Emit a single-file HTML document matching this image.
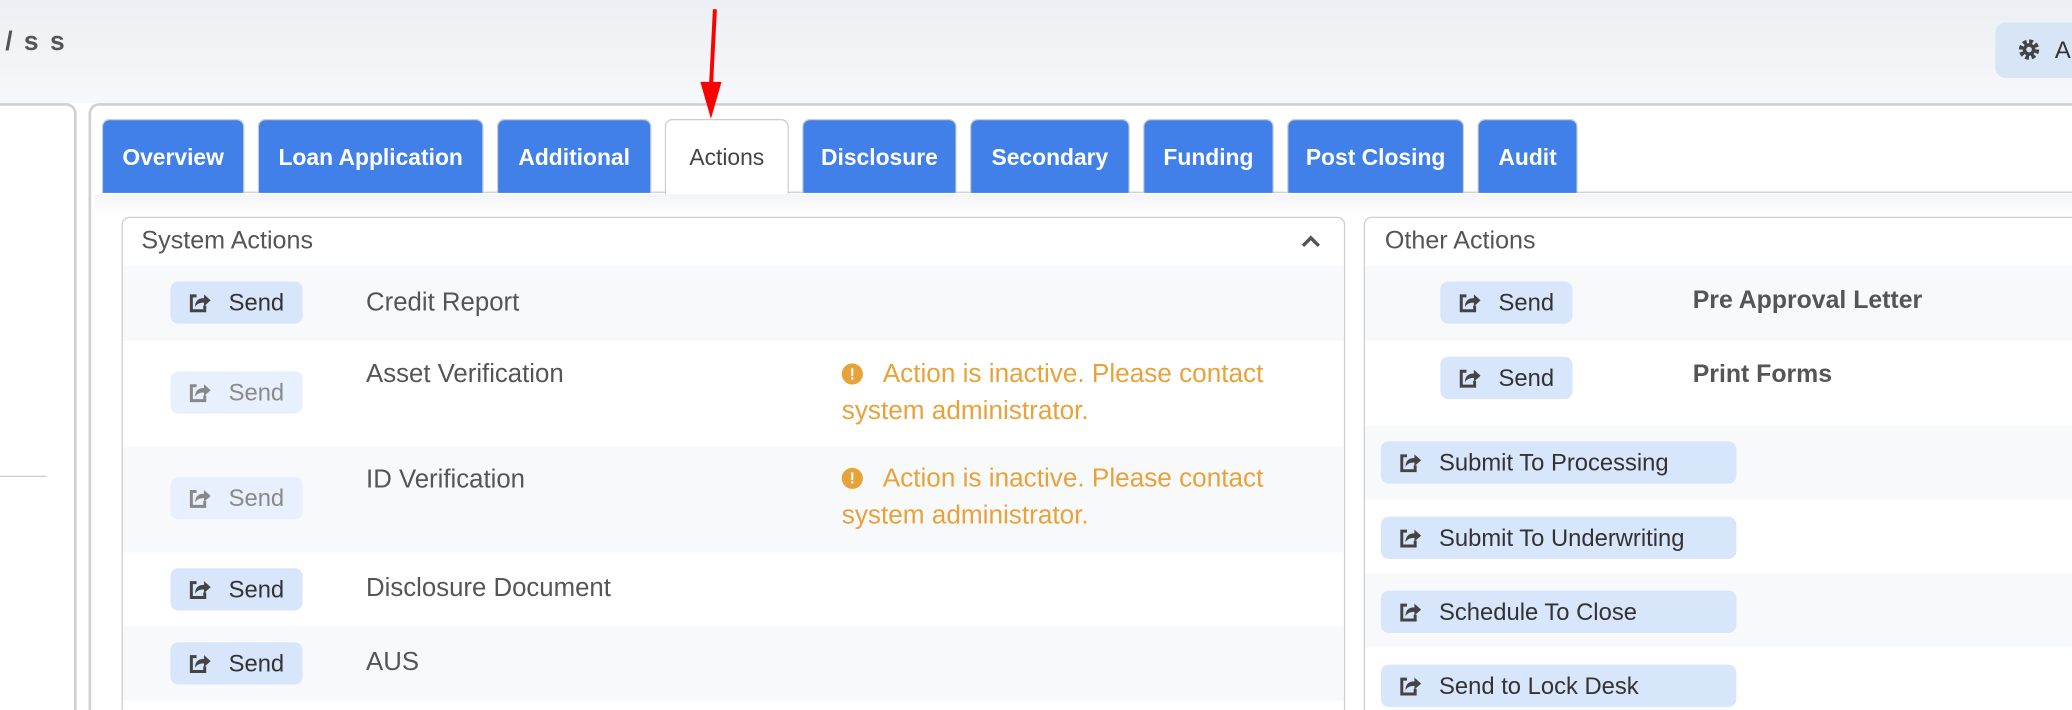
<!DOCTYPE html>
<html><head><meta charset="utf-8"><style>
html,body{margin:0;padding:0;width:2072px;height:710px;overflow:hidden;background:#fff}
#w{position:absolute;left:0;top:0;width:2072px;height:710px;overflow:hidden}
#s{position:absolute;left:0;top:0;width:1568px;height:538px;overflow:hidden;transform:scale(1.32143);transform-origin:0 0;font-family:"Liberation Sans",sans-serif;color:#555}
.a{position:absolute}
.hdr{left:0;top:0;width:1568px;height:78px;background:linear-gradient(#eceff3,#f6f8fb)}
.tab{position:absolute;top:90px;height:56px;background:#4080e8;color:#fff;font-weight:bold;font-size:17.3px;line-height:56px;text-align:center;border-radius:6px 6px 0 0;border:1px solid #c9cdd3;border-bottom:none;box-sizing:border-box;white-space:nowrap}
.tab.on{background:#fff;color:#444;font-weight:normal;height:57px}
.btn{position:absolute;height:32px;background:#d7e6fa;border-radius:6px;font-size:18px;line-height:33px;color:#333;box-sizing:border-box;white-space:nowrap}
.btn svg{position:absolute;left:13px;top:7px}
.btn span{position:absolute;left:44px}
.btn.dis{background:#e7f0fc;color:#8a8a8a}
.lbl{position:absolute;font-size:19.5px;color:#555;white-space:nowrap}
.row{position:absolute;left:0;right:0;background:#f8f9fb}
.warn{position:absolute;left:544px;width:380px;font-size:19.8px;line-height:28px;color:#e8a23a;white-space:nowrap}
.warn i{position:absolute;left:0;top:6px;width:16px;height:16px;border-radius:50%;background:#e8a23a;color:#fff;font-style:normal;font-weight:bold;font-size:12px;line-height:16px;text-align:center}
.warn b{font-weight:normal;padding-left:31px}
</style></head><body><div id="w"><div id="s">
<div class="a hdr"></div>
<div class="a" style="left:4px;top:21px;font-size:20px;font-weight:bold;color:#555;letter-spacing:1.5px">/ s s</div>
<div class="a" style="left:1510px;top:17px;width:80px;height:42px;background:#d7e5f7;border-radius:8px"></div>
<svg class="a" style="left:1527px;top:29px" width="17" height="17" viewBox="0 0 16 16"><circle cx="8" cy="8" r="5.5" fill="none" stroke="#444" stroke-width="3.5" stroke-dasharray="2.6 1.7"/><circle cx="8" cy="8" r="4.5" fill="#444"/><circle cx="8" cy="8" r="2" fill="#d7e5f7"/></svg>
<div class="a" style="left:1555px;top:28px;font-size:18px;color:#333">A</div>
<div class="a" style="left:-10px;top:78px;width:68px;height:520px;background:#fff;border:2px solid #d0d0d0;border-radius:8px;box-sizing:border-box"></div>
<div class="a" style="left:0;top:360px;width:35px;height:1px;background:#ccc"></div>
<div class="a" style="left:67px;top:78px;width:1520px;height:520px;background:#fff;border:2px solid #d0d0d0;border-radius:8px;box-sizing:border-box"></div>
<div class="a" style="left:77px;top:145px;width:1500px;height:1px;background:#cfcfcf"></div>
<div class="tab" style="left:77px;width:108px">Overview</div>
<div class="tab" style="left:195px;width:171px">Loan Application</div>
<div class="tab" style="left:376px;width:117px">Additional</div>
<div class="tab on" style="left:503px;width:94px">Actions</div>
<div class="tab" style="left:607px;width:117px">Disclosure</div>
<div class="tab" style="left:734px;width:121px">Secondary</div>
<div class="tab" style="left:865px;width:99px">Funding</div>
<div class="tab" style="left:974px;width:134px">Post Closing</div>
<div class="tab" style="left:1118px;width:76px">Audit</div>
<div class="a" style="left:72px;top:147px;width:1500px;height:16px;background:linear-gradient(#f3f4f6,#fff)"></div>

<div class="a" style="left:92px;top:164px;width:924px;height:440px;border:1px solid #cfcfcf;border-radius:6px;background:#fff;overflow:hidden">
 <div class="a" style="left:14px;top:7px;font-size:19px;color:#555">System Actions</div>
 <svg class="a" style="left:891px;top:12px" width="16" height="12" viewBox="0 0 16 12"><path d="M2 9L8 3l6 6" fill="none" stroke="#555" stroke-width="2.6"/></svg>
 <div class="row" style="top:36px;height:57px"></div>
 <div class="row" style="top:173px;height:80px"></div>
 <div class="row" style="top:309px;height:56px"></div>
 <div class="btn" style="left:36px;top:48px;width:100px"><svg width="18" height="18" viewBox="0 0 16 16"><path d="M6 3.5H2.5v10h9V10" fill="none" stroke="#444" stroke-width="2"/><path d="M5 11c0-4 2-6 6-6V2.5l4.5 4-4.5 4V8c-3 0-5 1-6 3z" fill="#444"/></svg><span>Send</span></div>
 <div class="lbl" style="left:184px;top:53px">Credit Report</div>
 <div class="btn dis" style="left:36px;top:116px;width:100px"><svg width="18" height="18" viewBox="0 0 16 16"><path d="M6 3.5H2.5v10h9V10" fill="none" stroke="#888" stroke-width="2"/><path d="M5 11c0-4 2-6 6-6V2.5l4.5 4-4.5 4V8c-3 0-5 1-6 3z" fill="#888"/></svg><span>Send</span></div>
 <div class="lbl" style="left:184px;top:107px">Asset Verification</div>
 <div class="warn" style="top:104px"><i>!</i><b>Action is inactive. Please contact</b><br>system administrator.</div>
 <div class="btn dis" style="left:36px;top:196px;width:100px"><svg width="18" height="18" viewBox="0 0 16 16"><path d="M6 3.5H2.5v10h9V10" fill="none" stroke="#888" stroke-width="2"/><path d="M5 11c0-4 2-6 6-6V2.5l4.5 4-4.5 4V8c-3 0-5 1-6 3z" fill="#888"/></svg><span>Send</span></div>
 <div class="lbl" style="left:184px;top:187px">ID Verification</div>
 <div class="warn" style="top:183px"><i>!</i><b>Action is inactive. Please contact</b><br>system administrator.</div>
 <div class="btn" style="left:36px;top:265px;width:100px"><svg width="18" height="18" viewBox="0 0 16 16"><path d="M6 3.5H2.5v10h9V10" fill="none" stroke="#444" stroke-width="2"/><path d="M5 11c0-4 2-6 6-6V2.5l4.5 4-4.5 4V8c-3 0-5 1-6 3z" fill="#444"/></svg><span>Send</span></div>
 <div class="lbl" style="left:184px;top:269px">Disclosure Document</div>
 <div class="btn" style="left:36px;top:321px;width:100px"><svg width="18" height="18" viewBox="0 0 16 16"><path d="M6 3.5H2.5v10h9V10" fill="none" stroke="#444" stroke-width="2"/><path d="M5 11c0-4 2-6 6-6V2.5l4.5 4-4.5 4V8c-3 0-5 1-6 3z" fill="#444"/></svg><span>Send</span></div>
 <div class="lbl" style="left:184px;top:325px">AUS</div>
</div>

<div class="a" style="left:1032px;top:164px;width:560px;height:440px;border:1px solid #cfcfcf;border-radius:6px;background:#fff;overflow:hidden">
 <div class="a" style="left:15px;top:7px;font-size:19px;color:#555">Other Actions</div>
 <div class="row" style="top:36px;height:57px"></div>
 <div class="row" style="top:157px;height:56px"></div>
 <div class="row" style="top:269px;height:56px"></div>
 <div class="btn" style="left:57px;top:48px;width:100px"><svg width="18" height="18" viewBox="0 0 16 16"><path d="M6 3.5H2.5v10h9V10" fill="none" stroke="#444" stroke-width="2"/><path d="M5 11c0-4 2-6 6-6V2.5l4.5 4-4.5 4V8c-3 0-5 1-6 3z" fill="#444"/></svg><span>Send</span></div>
 <div class="lbl" style="left:248px;top:51px;font-weight:bold;font-size:18.8px">Pre Approval Letter</div>
 <div class="btn" style="left:57px;top:105px;width:100px"><svg width="18" height="18" viewBox="0 0 16 16"><path d="M6 3.5H2.5v10h9V10" fill="none" stroke="#444" stroke-width="2"/><path d="M5 11c0-4 2-6 6-6V2.5l4.5 4-4.5 4V8c-3 0-5 1-6 3z" fill="#444"/></svg><span>Send</span></div>
 <div class="lbl" style="left:248px;top:107px;font-weight:bold;font-size:18.8px">Print Forms</div>
 <div class="btn" style="left:12px;top:169px;width:269px"><svg width="18" height="18" viewBox="0 0 16 16"><path d="M6 3.5H2.5v10h9V10" fill="none" stroke="#444" stroke-width="2"/><path d="M5 11c0-4 2-6 6-6V2.5l4.5 4-4.5 4V8c-3 0-5 1-6 3z" fill="#444"/></svg><span>Submit To Processing</span></div>
 <div class="btn" style="left:12px;top:226px;width:269px"><svg width="18" height="18" viewBox="0 0 16 16"><path d="M6 3.5H2.5v10h9V10" fill="none" stroke="#444" stroke-width="2"/><path d="M5 11c0-4 2-6 6-6V2.5l4.5 4-4.5 4V8c-3 0-5 1-6 3z" fill="#444"/></svg><span>Submit To Underwriting</span></div>
 <div class="btn" style="left:12px;top:282px;width:269px"><svg width="18" height="18" viewBox="0 0 16 16"><path d="M6 3.5H2.5v10h9V10" fill="none" stroke="#444" stroke-width="2"/><path d="M5 11c0-4 2-6 6-6V2.5l4.5 4-4.5 4V8c-3 0-5 1-6 3z" fill="#444"/></svg><span>Schedule To Close</span></div>
 <div class="btn" style="left:12px;top:338px;width:269px"><svg width="18" height="18" viewBox="0 0 16 16"><path d="M6 3.5H2.5v10h9V10" fill="none" stroke="#444" stroke-width="2"/><path d="M5 11c0-4 2-6 6-6V2.5l4.5 4-4.5 4V8c-3 0-5 1-6 3z" fill="#444"/></svg><span>Send to Lock Desk</span></div>
</div>

<svg class="a" style="left:0;top:0" width="600" height="100"><path d="M541 7L538 66" stroke="#f00" stroke-width="3"/><path d="M530 62h16l-8 28z" fill="#f00"/></svg>
</div></div></body></html>
